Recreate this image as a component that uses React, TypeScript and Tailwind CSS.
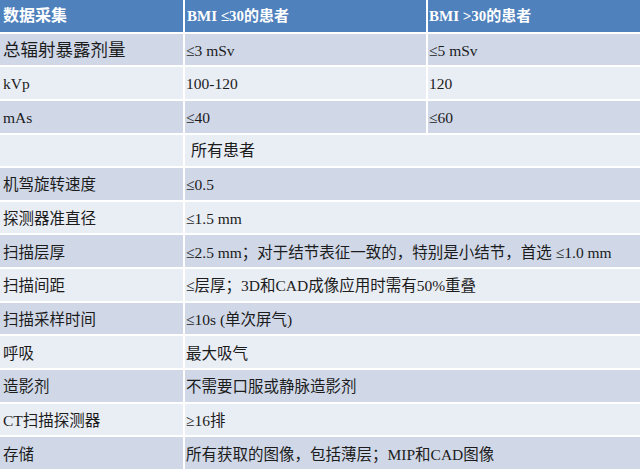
const font = "font-['Liberation_Serif','Noto_Sans_CJK_SC',serif]";

type Row = { label: string; a: string; b?: string; big?: boolean; indent?: boolean };

const rows: Row[] = [
  { label: "总辐射暴露剂量", a: "≤3 mSv", b: "≤5 mSv", big: true },
  { label: "kVp", a: "100-120", b: "120" },
  { label: "mAs", a: "≤40", b: "≤60" },
  { label: "", a: "所有患者", indent: true },
  { label: "机驾旋转速度", a: "≤0.5" },
  { label: "探测器准直径", a: "≤1.5 mm" },
  { label: "扫描层厚", a: "≤2.5 mm；对于结节表征一致的，特别是小结节，首选 ≤1.0 mm" },
  { label: "扫描间距", a: "≤层厚；3D和CAD成像应用时需有50%重叠" },
  { label: "扫描采样时间", a: "≤10s (单次屏气)" },
  { label: "呼吸", a: "最大吸气" },
  { label: "造影剂", a: "不需要口服或静脉造影剂" },
  { label: "CT扫描探测器", a: "≥16排" },
  { label: "存储", a: "所有获取的图像，包括薄层；MIP和CAD图像" },
];

export default function App() {
  return (
    <div className={`h-[471px] w-[640px] bg-white pb-[2px] text-[#1c1c1c] ${font}`}>
      <div className="grid h-full grid-cols-[183px_241px_1fr] grid-rows-[repeat(14,1fr)] gap-x-[2px] gap-y-[2px]">
        {/* header */}
        <div className="flex items-center bg-[#4f81bd] pl-[3px] pt-[1px] text-[16px] font-bold text-white">数据采集</div>
        <div className="flex items-center bg-[#4f81bd] pl-[2px] pt-[1px] text-[15px] font-bold text-white">BMI ≤30的患者</div>
        <div className="flex items-center bg-[#4f81bd] pl-[1px] pt-[1px] text-[15px] font-bold text-white">BMI &gt;30的患者</div>

        {rows.map((r, i) => {
          const bg = i % 2 === 0 ? "bg-[#d0d8e8]" : "bg-[#e9edf4]";
          return [
            <div
              key={`l${i}`}
              className={`flex items-center pl-[3px] pt-[2px] ${bg} ${r.big ? "text-[17.5px]" : "text-[15.5px]"}`}
            >
              {r.label}
            </div>,
            <div
              key={`a${i}`}
              className={`flex items-center whitespace-nowrap pt-[2px] ${bg} ${
                r.b === undefined ? "col-span-2" : ""
              } ${r.indent ? "pl-[6px] text-[16px]" : "pl-[1px] text-[15.5px]"}`}
            >
              {r.a}
            </div>,
            r.b !== undefined ? (
              <div key={`b${i}`} className={`flex items-center pl-[1px] pt-[2px] text-[15.5px] ${bg}`}>
                {r.b}
              </div>
            ) : null,
          ];
        })}
      </div>
    </div>
  );
}
